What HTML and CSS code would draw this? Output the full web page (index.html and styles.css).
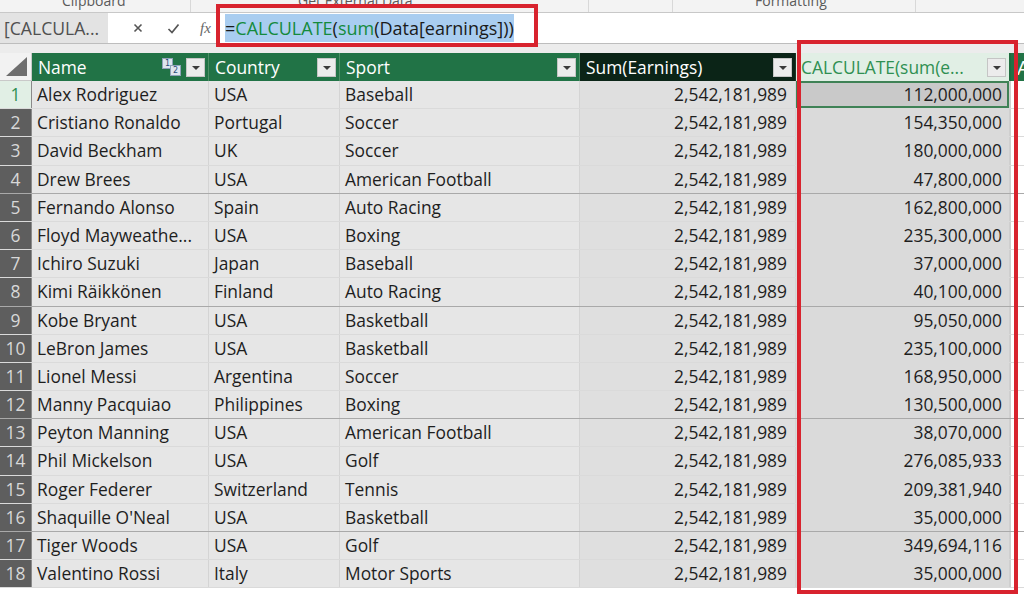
FILE: index.html
```html
<!DOCTYPE html>
<html>
<head>
<meta charset="utf-8">
<link rel="stylesheet" href="styles.css">
</head>
<body>
<div class="app">
  <div class="ribbon">
    <span class="grp g1">Clipboard</span>
    <span class="sep s1"></span>
    <span class="grp g2">Get External Data</span>
    <span class="sep s2"></span>
    <span class="sep s3"></span>
    <span class="grp g3">Formatting</span>
    <span class="sep s4"></span>
  </div>
  <div class="fbar">
    <div class="namebox">[CALCULA...</div>
    <div class="ficons">
      <svg class="ic-x" width="10" height="10" viewBox="0 0 10 10"><path d="M1.5 1.5 L8.5 8.5 M8.5 1.5 L1.5 8.5" stroke="#555" stroke-width="1.6" fill="none"/></svg>
      <svg class="ic-ok" width="13" height="11" viewBox="0 0 13 11"><path d="M1.5 6 L5 9.5 L11.5 1.5" stroke="#555" stroke-width="1.7" fill="none"/></svg>
      <span class="fx">fx</span>
    </div>
    <div class="formula"><span class="sel">=<span class="fn">CALCULATE</span>(<span class="fn">sum</span>(Data[earnings]))</span></div>
  </div>
  <div class="gap"></div>
  <div class="sheet">
    <div class="row head">
      <div class="corner"><svg width="30" height="26" viewBox="0 0 30 26"><polygon points="27,4 27,23 6,23" fill="#6e6e6e"/></svg></div>
      <div class="h">Name<span class="sorticon"><span class="b1">1</span><span class="b2">2</span></span><span class="dd"></span></div>
      <div class="h">Country<span class="dd"></span></div>
      <div class="h">Sport<span class="dd"></span></div>
      <div class="h dark">Sum(Earnings)<span class="dd"></span></div>
      <div class="h calc">CALCULATE(sum(e...<span class="dd"></span></div>
      <div class="h extra">A</div>
    </div>
    <div class="row first"><div class="rn">1</div><div class="c">Alex Rodriguez</div><div class="c">USA</div><div class="c">Baseball</div><div class="c n sum">2,542,181,989</div><div class="c n cv active">112,000,000</div><div class="c x"></div></div>
    <div class="row"><div class="rn">2</div><div class="c">Cristiano Ronaldo</div><div class="c">Portugal</div><div class="c">Soccer</div><div class="c n sum">2,542,181,989</div><div class="c n cv">154,350,000</div><div class="c x"></div></div>
    <div class="row"><div class="rn">3</div><div class="c">David Beckham</div><div class="c">UK</div><div class="c">Soccer</div><div class="c n sum">2,542,181,989</div><div class="c n cv">180,000,000</div><div class="c x"></div></div>
    <div class="row grp4"><div class="rn">4</div><div class="c">Drew Brees</div><div class="c">USA</div><div class="c">American Football</div><div class="c n sum">2,542,181,989</div><div class="c n cv">47,800,000</div><div class="c x"></div></div>
    <div class="row"><div class="rn">5</div><div class="c">Fernando Alonso</div><div class="c">Spain</div><div class="c">Auto Racing</div><div class="c n sum">2,542,181,989</div><div class="c n cv">162,800,000</div><div class="c x"></div></div>
    <div class="row"><div class="rn">6</div><div class="c">Floyd Mayweathe...</div><div class="c">USA</div><div class="c">Boxing</div><div class="c n sum">2,542,181,989</div><div class="c n cv">235,300,000</div><div class="c x"></div></div>
    <div class="row"><div class="rn">7</div><div class="c">Ichiro Suzuki</div><div class="c">Japan</div><div class="c">Baseball</div><div class="c n sum">2,542,181,989</div><div class="c n cv">37,000,000</div><div class="c x"></div></div>
    <div class="row grp4"><div class="rn">8</div><div class="c">Kimi Räikkönen</div><div class="c">Finland</div><div class="c">Auto Racing</div><div class="c n sum">2,542,181,989</div><div class="c n cv">40,100,000</div><div class="c x"></div></div>
    <div class="row"><div class="rn">9</div><div class="c">Kobe Bryant</div><div class="c">USA</div><div class="c">Basketball</div><div class="c n sum">2,542,181,989</div><div class="c n cv">95,050,000</div><div class="c x"></div></div>
    <div class="row"><div class="rn">10</div><div class="c">LeBron James</div><div class="c">USA</div><div class="c">Basketball</div><div class="c n sum">2,542,181,989</div><div class="c n cv">235,100,000</div><div class="c x"></div></div>
    <div class="row"><div class="rn">11</div><div class="c">Lionel Messi</div><div class="c">Argentina</div><div class="c">Soccer</div><div class="c n sum">2,542,181,989</div><div class="c n cv">168,950,000</div><div class="c x"></div></div>
    <div class="row grp4"><div class="rn">12</div><div class="c">Manny Pacquiao</div><div class="c">Philippines</div><div class="c">Boxing</div><div class="c n sum">2,542,181,989</div><div class="c n cv">130,500,000</div><div class="c x"></div></div>
    <div class="row"><div class="rn">13</div><div class="c">Peyton Manning</div><div class="c">USA</div><div class="c">American Football</div><div class="c n sum">2,542,181,989</div><div class="c n cv">38,070,000</div><div class="c x"></div></div>
    <div class="row"><div class="rn">14</div><div class="c">Phil Mickelson</div><div class="c">USA</div><div class="c">Golf</div><div class="c n sum">2,542,181,989</div><div class="c n cv">276,085,933</div><div class="c x"></div></div>
    <div class="row"><div class="rn">15</div><div class="c">Roger Federer</div><div class="c">Switzerland</div><div class="c">Tennis</div><div class="c n sum">2,542,181,989</div><div class="c n cv">209,381,940</div><div class="c x"></div></div>
    <div class="row grp4"><div class="rn">16</div><div class="c">Shaquille O'Neal</div><div class="c">USA</div><div class="c">Basketball</div><div class="c n sum">2,542,181,989</div><div class="c n cv">35,000,000</div><div class="c x"></div></div>
    <div class="row"><div class="rn">17</div><div class="c">Tiger Woods</div><div class="c">USA</div><div class="c">Golf</div><div class="c n sum">2,542,181,989</div><div class="c n cv">349,694,116</div><div class="c x"></div></div>
    <div class="row"><div class="rn">18</div><div class="c">Valentino Rossi</div><div class="c">Italy</div><div class="c">Motor Sports</div><div class="c n sum">2,542,181,989</div><div class="c n cv">35,000,000</div><div class="c x"></div></div>
  </div>
  <div class="redbox rb1"></div>
  <div class="redbox rb2"></div>
</div>
</body>
</html>
```

FILE: styles.css
```css
* { box-sizing: border-box; }
html, body { margin: 0; padding: 0; background: #ffffff; }
body { width: 1024px; height: 596px; overflow: hidden; font-family: "Open Sans", Lato, sans-serif; color: #1e1e1e; }
.app { position: relative; width: 1024px; height: 596px; }

.ribbon { position: relative; height: 12px; background: #f3f3f3; overflow: hidden; color: #5a5a5a; font-size: 14px; }
.grp { position: absolute; top: -8px; line-height: 18px; }
.g1 { left: 62px; }
.g2 { left: 298px; }
.g3 { left: 755px; }
.sep { position: absolute; top: 0; width: 1px; height: 12px; background: #d8d8d8; }
.s1 { left: 190px; } .s2 { left: 588px; } .s3 { left: 672px; } .s4 { left: 915px; }

.fbar { display: flex; height: 32px; border-top: 1px solid #c8c8c8; border-bottom: 1px solid #bdbdbd; background: #fff; }
.namebox { width: 108px; background: #e3e3e3; color: #505050; font-size: 17.6px; line-height: 30px; padding-left: 4px; white-space: nowrap; overflow: hidden; }
.ficons { width: 111px; display: flex; align-items: center; border-right: 1px solid #d0d0d0; position: relative; }
.ic-x { margin-left: 25px; }
.ic-ok { margin-left: 24px; }
.fx { margin-left: 20px; font-family: "Liberation Serif", serif; font-style: italic; font-size: 15px; color: #666; }
.formula { flex: 1; padding-left: 6px; font-size: 18px; line-height: 30px; white-space: nowrap; }
.sel { background: #a9cdf0; color: #1a1a1a; padding: 2px 0; }
.fn { color: #148a3c; }

.gap { height: 9px; background: #ececec; }

.sheet { background: #e6e6e6; }
.row { display: grid; grid-template-columns: 32px 177px 131px 240px 216px 215px 1fr; height: 28.2px; border-bottom: 1px solid #dadada; font-size: 17.4px; }
.row.grp4 { border-bottom: 1px solid #a9a9a9; }
.row.head { height: 28px; border-bottom: none; }
.corner { background: #f2f2f2; border-right: 1px solid #c9c9c9; border-bottom: 1px solid #c9c9c9; }
.corner svg { display: block; }
.h { position: relative; display: flex; align-items: center; padding-left: 6px; background: #217346; color: #ffffff; border-right: 1px solid #4d8f66; white-space: nowrap; overflow: hidden; }
.h.dark { background: #0b2417; border-right: 1px solid #1a3a27; }
.h.calc { background: #e1efe5; color: #2f8f52; padding-left: 5px; border-right: 2px solid #1f6d3f; }
.h.extra { background: #217346; color: #fff; padding-left: 6px; font-size: 20px; border-right: none; }
.dd { position: absolute; right: 3px; top: 5px; width: 19px; height: 19px; background: #ececec; border: 1px solid #c5c5c5; }
.dd::after { content: ""; position: absolute; left: 5px; top: 7px; border-left: 4px solid transparent; border-right: 4px solid transparent; border-top: 4px solid #3a3a3a; }
.sorticon { position: absolute; right: 26px; top: 5px; width: 20px; height: 19px; }
.sorticon span { position: absolute; width: 11px; height: 11px; background: #dfe6ee; border: 1px solid #8fa3b8; color: #2b4f7a; font-size: 8px; line-height: 9px; text-align: center; font-family: "DejaVu Sans", sans-serif; }
.sorticon .b1 { left: 0; top: 0; }
.sorticon .b2 { left: 8px; top: 7px; }

.rn { background: #5e5e5e; color: #d8d8d8; text-align: center; line-height: 27px; border-right: 1px solid #8a8a8a; }
.row.first .rn { background: #e1efe5; color: #2f8f52; }
.c { padding-left: 5px; line-height: 27px; white-space: nowrap; overflow: hidden; border-right: 1px solid #d4d4d4; }
.c.n { text-align: right; padding-right: 8px; padding-left: 0; }
.c.sum { background: #dfdfdf; }
.c.cv { background: #dadada; padding-right: 7px; border-right: 2px solid #cfcfcf; }
.c.active { background: #c9c9c9; box-shadow: inset 0 0 0 2px #3f8256; }
.c.x { background: #ffffff; border-right: none; }

.redbox { position: absolute; border: 4px solid #d8232e; pointer-events: none; }
.rb1 { left: 216px; top: 4px; width: 322px; height: 43px; }
.rb2 { left: 797px; top: 40px; width: 221px; height: 554px; }
```
